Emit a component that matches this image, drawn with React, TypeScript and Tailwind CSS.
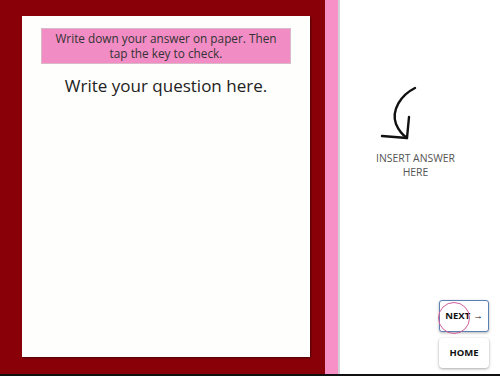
export default function App() {
  return (
    <div className="w-[500px] h-[376px] flex flex-col bg-white overflow-hidden" style={{ fontFamily: '"Open Sans", sans-serif' }}>
      <div className="flex flex-1 min-h-0">
        {/* Left: question card */}
        <div className="w-[325px] bg-[#8a0008] pl-[22px] pt-[16px]">
          <div className="w-[288px] h-[341px] bg-[#fefefc] shadow-[1px_1px_2px_rgba(0,0,0,0.45)] flex flex-col items-center pt-[12px]">
            <div className="w-[250px] h-[36px] bg-[#f28cc4] border border-[#d9b8c8] flex items-center justify-center text-center text-[11.8px] leading-[15px] text-[#333]">
              Write down your answer on paper. Then
              <br />
              tap the key to check.
            </div>
            <div className="mt-[9px] text-[17px] text-[#222]">Write your question here.</div>
          </div>
        </div>

        {/* Pink strip */}
        <div className="w-[13px] bg-[#f690c6]" />
        <div className="w-[2px] bg-[#d2d2d6]" />

        {/* Right: answer panel */}
        <div className="flex-1 flex flex-col">
          <div className="flex flex-col pt-[86px]">
            <svg width="38" height="56" viewBox="0 0 38 56" className="ml-[40px]">
              <path d="M35 2 C 21 9, 11 24, 16 38 C 19 45, 24 50, 27 52" fill="none" stroke="#111" strokeWidth="2.4" strokeLinecap="round" />
              <path d="M2 50 L 27 52 L 29 31" fill="none" stroke="#111" strokeWidth="2.4" strokeLinecap="round" strokeLinejoin="round" />
            </svg>
            <div className="mt-[9px] pr-[9px] text-center text-[10.4px] leading-[14px] text-[#555]">
              INSERT ANSWER
              <br />
              HERE
            </div>
          </div>
          <div className="flex-1" />
          <div className="flex flex-col items-end pr-[11px] pb-[6px] gap-[6px]">
            <div className="relative w-[50px] h-[32px] bg-white border border-[#5a7fb2] rounded-[3px] shadow-[0_1px_3px_rgba(0,0,0,0.3)] flex items-center justify-center text-[9.5px] font-bold text-[#111]">
              <span>NEXT</span>
              <span className="ml-[3px] font-normal">→</span>
              <span className="absolute left-[-2px] top-[1px] w-[32px] h-[32px] rounded-full border border-[#d0609a]" />
            </div>
            <div className="w-[50px] h-[30px] bg-white rounded-[4px] shadow-[0_1px_3px_rgba(0,0,0,0.35)] flex items-center justify-center text-[9.5px] font-bold text-[#111]">
              HOME
            </div>
          </div>
        </div>
      </div>
      <div className="h-[2px] bg-[#111]" />
    </div>
  );
}
